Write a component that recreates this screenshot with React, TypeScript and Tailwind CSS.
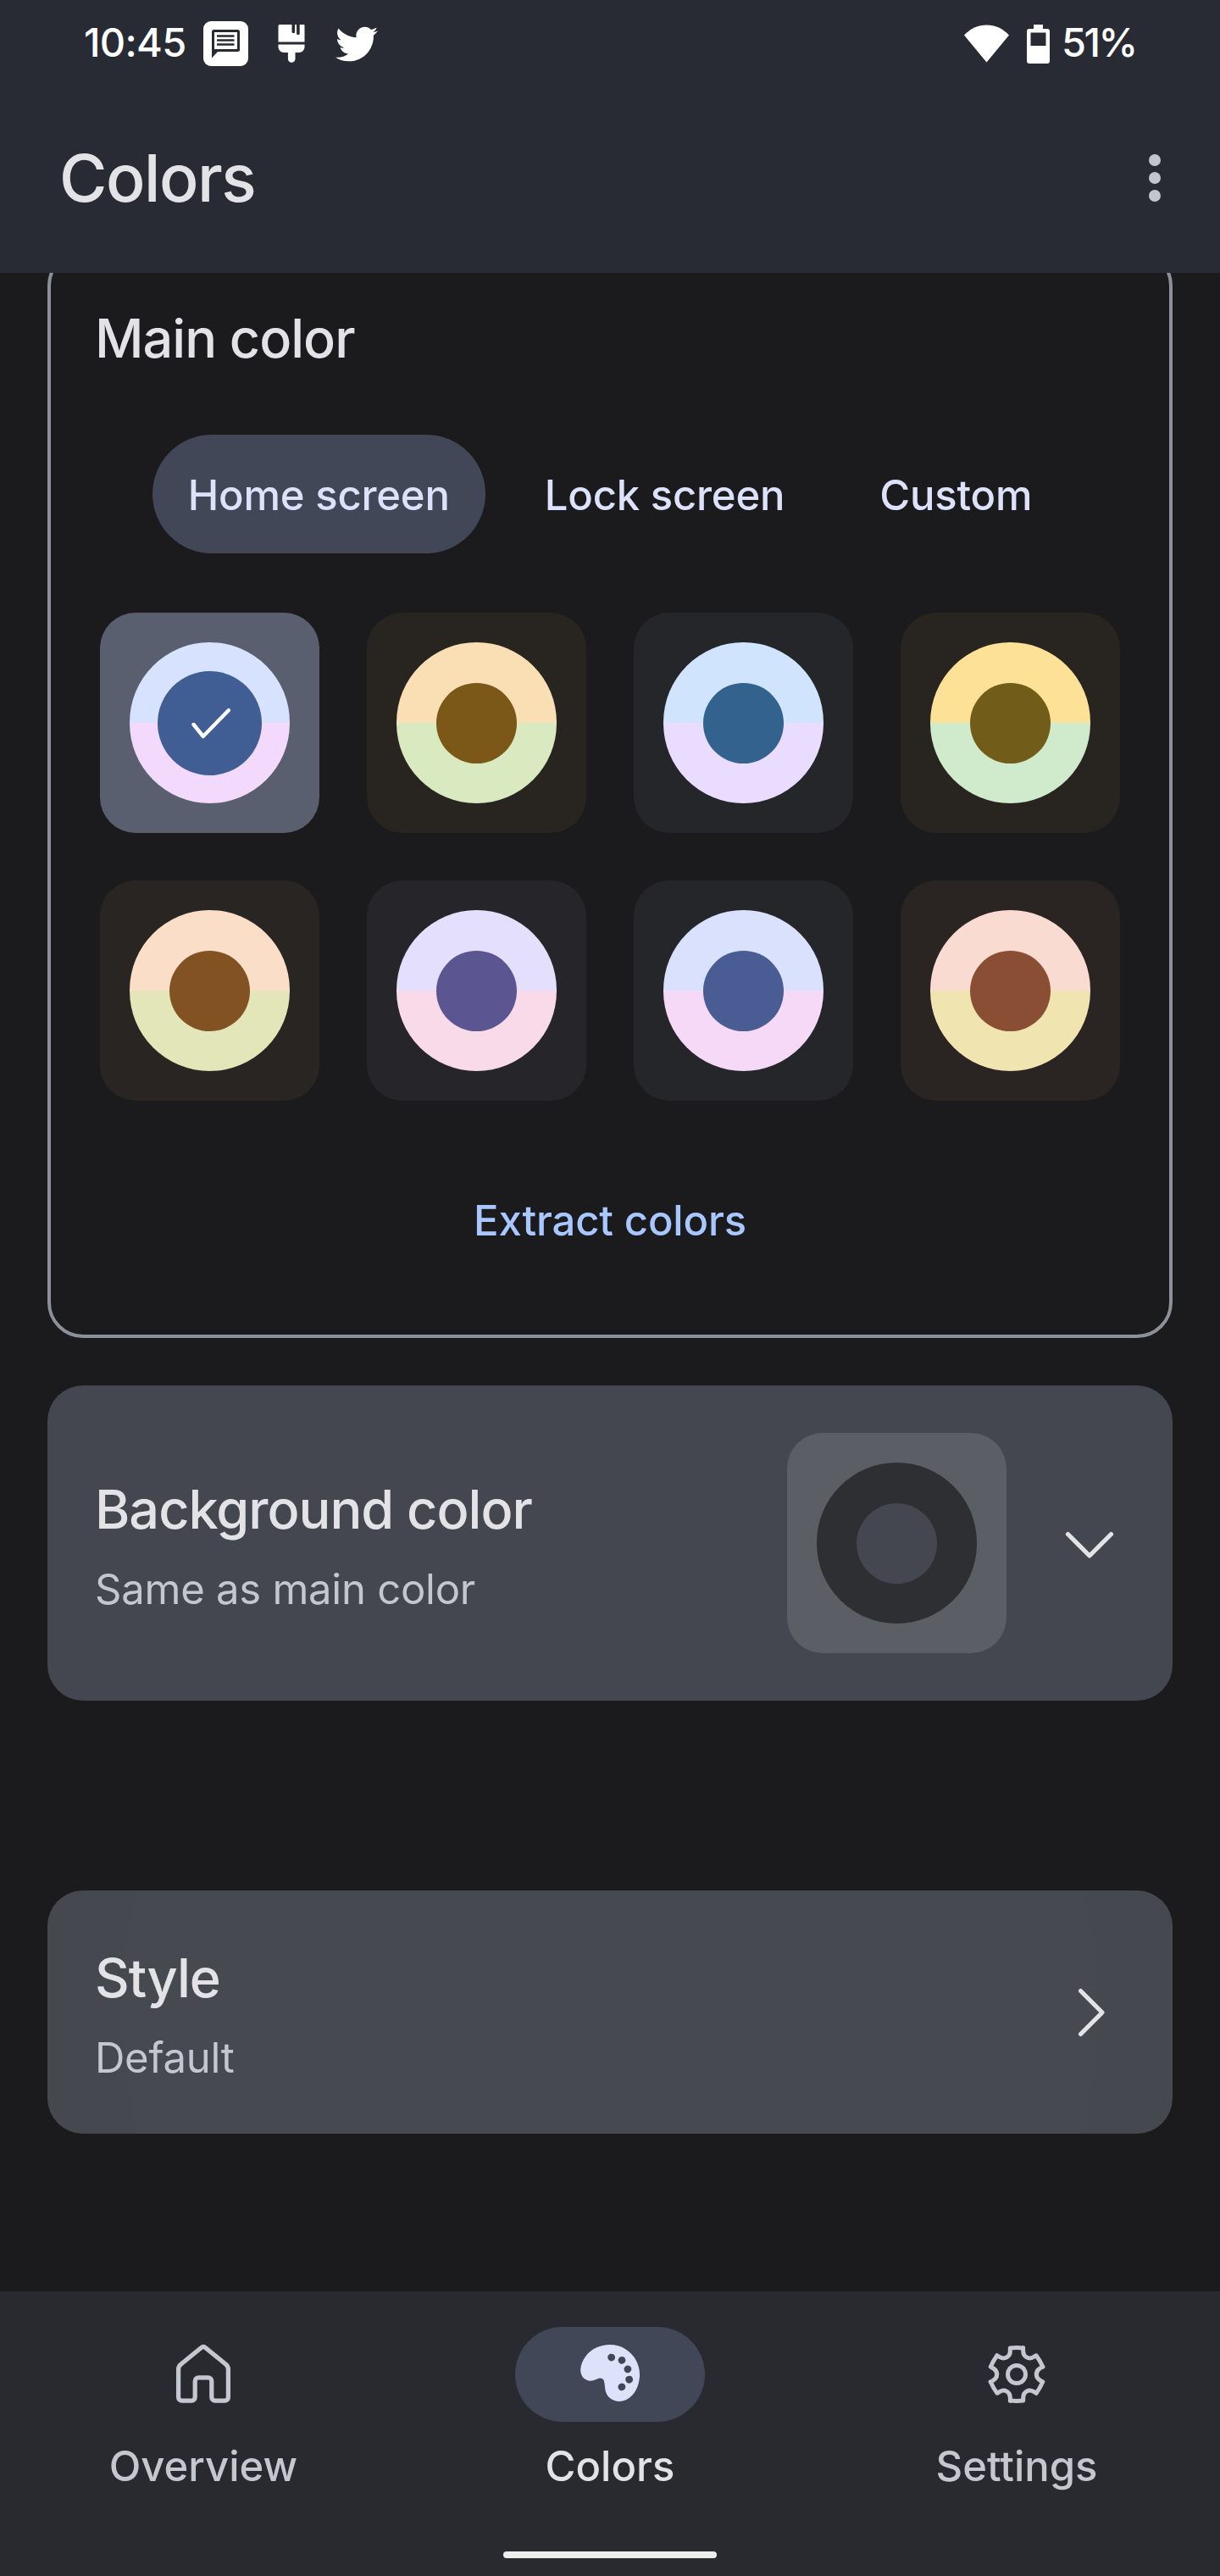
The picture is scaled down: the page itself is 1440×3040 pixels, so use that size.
import React, { useState } from 'react';
import { FaTwitter } from 'react-icons/fa';
import clsx from 'clsx';

interface Swatch {
  tile: string;
  top: string;
  bottom: string;
  center: string;
}

const swatches: Swatch[] = [
  { tile: 'bg-[#595f6e]', top: 'bg-[#d7e2ff]', bottom: 'bg-[#f3d9fc]', center: 'bg-[#405e93]' },
  { tile: 'bg-[#282420]', top: 'bg-[#fadeb4]', bottom: 'bg-[#d9e9c0]', center: 'bg-[#7b5718]' },
  { tile: 'bg-[#24262a]', top: 'bg-[#d0e4fd]', bottom: 'bg-[#eadcfe]', center: 'bg-[#32628d]' },
  { tile: 'bg-[#282520]', top: 'bg-[#fce196]', bottom: 'bg-[#cfebcc]', center: 'bg-[#715c19]' },
  { tile: 'bg-[#292522]', top: 'bg-[#fadec7]', bottom: 'bg-[#e2e6b8]', center: 'bg-[#825222]' },
  { tile: 'bg-[#26252a]', top: 'bg-[#e4dffd]', bottom: 'bg-[#f8dae8]', center: 'bg-[#5b5691]' },
  { tile: 'bg-[#24262a]', top: 'bg-[#dae1fd]', bottom: 'bg-[#f6d8f7]', center: 'bg-[#4a5c94]' },
  { tile: 'bg-[#2a2422]', top: 'bg-[#f9dbd1]', bottom: 'bg-[#f0e4b0]', center: 'bg-[#8a4e35]' },
];

const tabs = ['Home screen', 'Lock screen', 'Custom'];

const StatusBar = () => (
  <div className="flex h-[103px] items-center pl-[99px] pr-[100px] text-white">
    <span className="w-[141px] pb-1 text-[47px] leading-[48px] font-medium tracking-[-0.7px] whitespace-nowrap">10:45</span>
    <svg className="h-[53px] w-[53px]" viewBox="0 0 53 53">
      <rect width="53" height="53" rx="9" fill="#fff" />
      <path d="M12 10h28.500a2.500 2.500 0 0 1 2.500 2.500v21a2.500 2.500 0 0 1-2.500 2.500H17l-7 7.500V12.500A2.500 2.500 0 0 1 12 10z" fill="#282b33" />
      <path d="M13 13h27v20H13z" fill="#fff" />
      <path d="M16 17.500h20.500M16 22.500h20.500M16 27.500h20.500" stroke="#282b33" strokeWidth="2.700" />
    </svg>
    <svg className="ml-[34.500px] h-[45px] w-8" viewBox="0 0 32 45" fill="#fff">
      <path d="M2 0h14.500v8.500a1.800 1.800 0 0 0 3.600 0V0h2v10.500a1.800 1.800 0 0 0 3.600 0V0H30.500a1 1 0 0 1 1 1v19.500H.500V1.500A1.500 1.500 0 0 1 2 0z" />
      <path d="M.500 23.500h31v3.500a6.500 6.500 0 0 1-6.500 6h-4.500v7.500a4.300 4.300 0 0 1-8.600 0V33H7a6.500 6.500 0 0 1-6.500-6z" />
    </svg>
    <FaTwitter className="ml-[36.500px] size-[50px]" />
    <svg className="ml-auto h-[45px] w-[53px]" viewBox="0 0 53 45" fill="#fff">
      <path d="M26.500 44.500L0 12.500C7 4.800 16.500.500 26.500.500S46 4.800 53 12.500z" />
    </svg>
    <svg className="ml-[21px] h-[46px] w-[27px]" viewBox="0 0 27 46" fill="#fff">
      <path fillRule="evenodd" d="M8 0h11v5h5a3 3 0 0 1 3 3v35a3 3 0 0 1-3 3H3a3 3 0 0 1-3-3V8a3 3 0 0 1 3-3h5zM4.500 9.500V25h18V9.500z" />
    </svg>
    <span className="ml-[14px] w-[87px] pb-1 text-[47px] leading-[48px] font-medium tracking-[-2.500px] whitespace-nowrap">51%</span>
  </div>
);

const Header = () => (
  <header className="h-[322px] bg-[#282b33]">
    <StatusBar />
    <div className="flex items-center justify-between pt-[59px] pr-[70px] pl-[70px]">
      <h1 className="text-[77px] leading-[96px] font-medium tracking-[-1.500px] whitespace-nowrap text-[#e3e2e6]">Colors</h1>
      <button className="flex flex-col gap-[7px]">
        <span className="size-[14px] rounded-full bg-[#c3c6cf]" />
        <span className="size-[14px] rounded-full bg-[#c3c6cf]" />
        <span className="size-[14px] rounded-full bg-[#c3c6cf]" />
      </button>
    </div>
  </header>
);

interface ColorTileProps extends Swatch {
  selected?: boolean;
  onClick?: () => void;
}

const ColorTile: React.FC<ColorTileProps> = ({ tile, top, bottom, center, selected = false, onClick }) => (
  <button onClick={onClick} className={clsx('flex h-[260px] w-[259px] items-center justify-center rounded-[42px]', tile)}>
    <div className="relative flex h-[190px] w-[189px] flex-col overflow-hidden rounded-full">
      <div className={clsx('flex-1', top)} />
      <div className={clsx('flex-1', bottom)} />
      <div className="absolute inset-0 flex items-center justify-center">
        <div className={clsx('flex items-center justify-center rounded-full', selected ? 'size-[123px]' : 'size-[95px]', center)}>
          {selected && (
            <svg className="size-14" viewBox="0 0 56 56" fill="none" stroke="#fff" strokeWidth="4.400" strokeLinecap="round" strokeLinejoin="round">
              <path d="M8.500 30l11.300 14L49.800 13.200" />
            </svg>
          )}
        </div>
      </div>
    </div>
  </button>
);

interface ItemTextProps {
  title: string;
  subtitle: string;
}

const ItemText: React.FC<ItemTextProps> = ({ title, subtitle }) => (
  <div className="flex flex-col gap-[27px] whitespace-nowrap">
    <span className="text-[63px] leading-[72px] font-medium tracking-[-1px] text-[#e3e2e6]">{title}</span>
    <span className="text-[49px] leading-[64px] tracking-[-0.250px] text-[#c4c6d0]">{subtitle}</span>
  </div>
);

const HomeIcon = () => (
  <svg className="size-[84px]" viewBox="0 0 84 84" fill="none" stroke="#c4c6d0" strokeWidth="5.250" strokeLinejoin="round">
    <path d="M39.300 10.700a4.200 4.200 0 0 1 5.400 0L68.600 30.300a7.500 7.500 0 0 1 2.800 5.800V69a4 4 0 0 1-4 4H55.800a4 4 0 0 1-4-4V49.900a4 4 0 0 0-4-4H36.200a4 4 0 0 0-4 4V69a4 4 0 0 1-4 4H16.600a4 4 0 0 1-4-4V36.100a7.500 7.500 0 0 1 2.800-5.800z" />
  </svg>
);

const PaletteIcon = () => (
  <svg className="size-[84px]" viewBox="0 0 24 24" fill="#dce2f9">
    <path d="M3.839 5.858c2.940-3.916 9.030-5.055 13.364-2.360 4.280 2.660 5.854 7.777 4.100 12.577-1.655 4.533-6.016 6.328-9.159 4.048-1.177-.854-1.634-1.925-1.854-3.664l-.106-.987-.045-.398c-.123-.934-.311-1.352-.705-1.572-.535-.298-.892-.305-1.595-.033l-.351.146-.179.078c-1.014.440-1.688.595-2.541.416l-.200-.047-.164-.047c-2.789-.864-3.202-4.647-.565-8.157zm12.928 4.722a1.250 1.250 0 1 0 2.415-.647 1.250 1.250 0 0 0-2.415.647zm.495 3.488a1.250 1.250 0 1 0 2.414-.647 1.250 1.250 0 0 0-2.414.647zm-2.474-6.491a1.250 1.250 0 1 0 2.415-.647 1.250 1.250 0 0 0-2.415.647zm-.028 8.998a1.250 1.250 0 1 0 2.415-.647 1.250 1.250 0 0 0-2.415.647zm-3.497-9.970a1.250 1.250 0 1 0 2.415-.646 1.250 1.250 0 0 0-2.415.646z" />
  </svg>
);

const GearIcon = () => (
  <svg className="size-[84px]" viewBox="-42 -42 84 84" fill="none" stroke="#c4c6d0" strokeWidth="5" strokeLinecap="round" strokeLinejoin="round">
    <circle r="10.500" />
    {[0, 60, 120, 180, 240, 300].map((angle) => (
      <path
        key={angle}
        transform={`rotate(${angle})`}
        d="M7.700-31.100Q0-32-7.700-31.100L-7.700-27.300C-7.660-20.900-14.240-17.070-19.800-20.300L-23.200-22.100"
      />
    ))}
  </svg>
);

interface NavItemProps {
  label: string;
  active?: boolean;
  children: React.ReactNode;
}

const NavItem: React.FC<NavItemProps> = ({ label, active = false, children }) => (
  <button className="flex flex-1 flex-col items-center gap-[21px]">
    <span className={clsx('flex h-28 w-56 items-center justify-center rounded-full', active && 'bg-[#414757]')}>{children}</span>
    <span className={clsx('text-[49px] leading-[64px] font-medium whitespace-nowrap', active ? 'text-[#e3e2e6]' : 'text-[#c4c6d0]')}>
      {label}
    </span>
  </button>
);

const App = () => {
  const [activeTab, setActiveTab] = useState('Home screen');
  const [selected, setSelected] = useState(0);

  return (
    <div className="flex h-[3040px] w-[1440px] flex-col overflow-hidden bg-[#1b1b1d] font-['Inter',sans-serif]">
      <Header />

      <main className="h-[2382px] overflow-hidden px-14">
        <section className="-mt-[27px] flex h-[1284px] flex-col rounded-[42px] border-4 border-[#8e9099] px-[58px] pt-16">
          <h2 className="-ml-1.5 text-[63px] leading-[72px] font-medium tracking-[-1px] whitespace-nowrap text-[#e3e2e6]">Main color</h2>
          <div className="mt-[78px] flex justify-center gap-7">
            {tabs.map((tab) => (
              <button
                key={tab}
                onClick={() => setActiveTab(tab)}
                className={clsx(
                  'h-[140px] rounded-full px-[42px] pt-[3px] text-[49px] leading-[64px] font-medium tracking-[-0.200px] whitespace-nowrap text-[#dce2f9]',
                  activeTab === tab && 'bg-[#414757]'
                )}
              >
                {tab}
              </button>
            ))}
          </div>
          <div className="mt-[70px] grid grid-cols-4 gap-14">
            {swatches.map((swatch, index) => (
              <ColorTile key={index} {...swatch} selected={selected === index} onClick={() => setSelected(index)} />
            ))}
          </div>
          <button className="mt-[110px] text-[49px] leading-[64px] font-medium tracking-[-0.150px] text-[#a9c7ff]">Extract colors</button>
        </section>

        <section className="mt-14 flex h-[372px] rounded-[42px] bg-[#44474f] px-14">
          <div className="flex-1 pt-[110px]">
            <ItemText title="Background color" subtitle="Same as main color" />
          </div>
          <div className="flex items-center gap-14">
            <ColorTile tile="bg-[#5c5e66]" top="bg-[#2e2f33]" bottom="bg-[#2e2f33]" center="bg-[#44474f]" />
            <svg className="size-[84px]" viewBox="0 0 84 84" fill="none" stroke="#e3e2e6" strokeWidth="5.250" strokeLinecap="round" strokeLinejoin="round">
              <path d="M16.500 31.500L42 57l25.500-25.500" />
            </svg>
          </div>
        </section>

        <section className="mt-56 flex h-[287px] items-center justify-between rounded-[42px] bg-[#45484f] bg-[radial-gradient(circle_at_center,#464950_575px,#45484f_576px)] px-14">
          <div className="self-start pt-[67px]">
            <ItemText title="Style" subtitle="Default" />
          </div>
          <svg className="size-[84px]" viewBox="0 0 84 84" fill="none" stroke="#e3e2e6" strokeWidth="5.250" strokeLinecap="round" strokeLinejoin="round">
            <path d="M31.500 16.500L57 42 31.500 67.500" />
          </svg>
        </section>
      </main>

      <nav className="flex h-[336px] flex-col items-center bg-[#282a2f] pt-[42px]">
        <div className="flex w-full">
          <NavItem label="Overview">
            <HomeIcon />
          </NavItem>
          <NavItem label="Colors" active>
            <PaletteIcon />
          </NavItem>
          <NavItem label="Settings">
            <GearIcon />
          </NavItem>
        </div>
        <div className="mt-[68px] h-2 w-[252px] rounded-full bg-[#ededed]" />
      </nav>
    </div>
  );
};

export default App;
